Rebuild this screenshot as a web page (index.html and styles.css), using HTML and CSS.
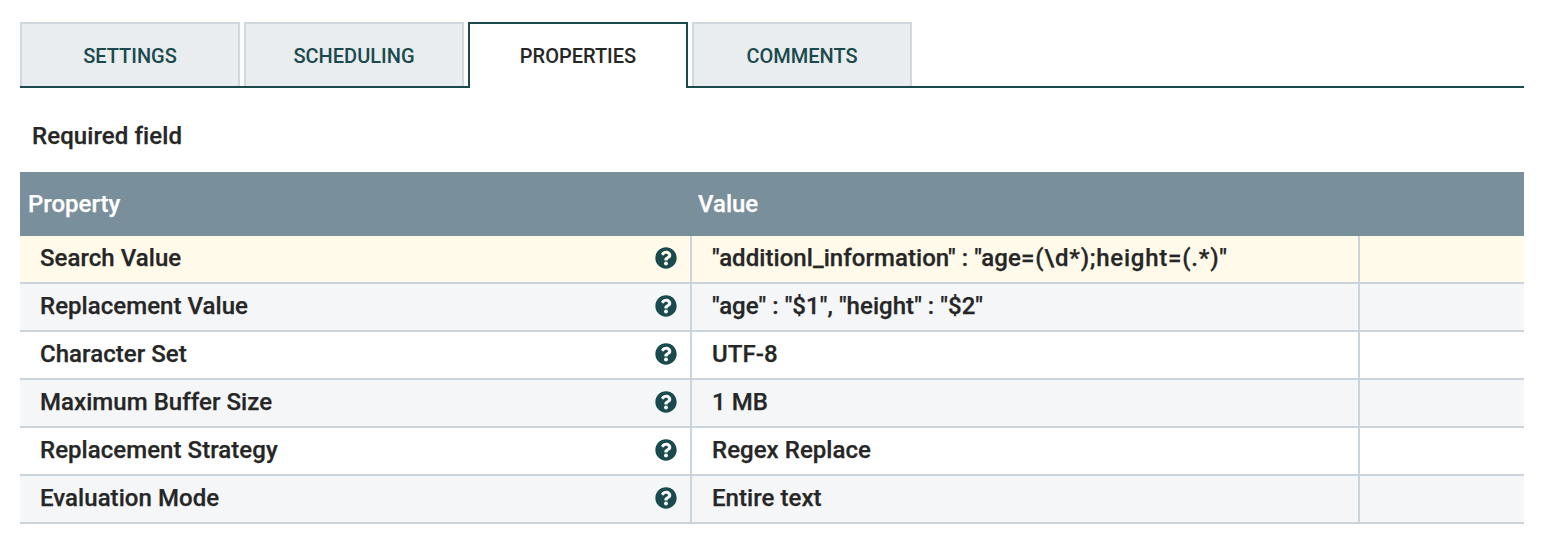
FILE: index.html
```html
<!DOCTYPE html>
<html lang="en">
<head>
  <meta charset="UTF-8">
  <title>Configure Processor</title>
  <link rel="stylesheet" href="styles.css">
</head>
<body>
  <svg class="icon-defs" width="0" height="0">
    <symbol id="help" viewBox="0 0 512 512">
      <path d="M504 256c0 136.997-111.043 248-248 248S8 392.997 8 256C8 119.083 119.043 8 256 8s248 111.083 248 248zM262.655 90c-54.497 0-89.255 22.957-116.549 63.758-3.536 5.286-2.353 12.415 2.715 16.258l34.699 26.31c5.205 3.947 12.621 3.008 16.665-2.122 17.864-22.658 30.113-35.797 57.303-35.797 20.429 0 45.698 13.148 45.698 32.958 0 14.976-12.363 22.667-32.534 33.976C247.128 238.528 216 254.941 216 296v4c0 6.627 5.373 12 12 12h56c6.627 0 12-5.373 12-12v-1.333c0-28.462 83.186-29.647 83.186-106.667 0-58.002-60.165-102-116.531-102zM256 338c-25.365 0-46 20.635-46 46 0 25.364 20.635 46 46 46s46-20.636 46-46c0-25.365-20.635-46-46-46z"/>
    </symbol>
  </svg>

  <div class="tabs">
    <div class="tab">SETTINGS</div>
    <div class="tab">SCHEDULING</div>
    <div class="tab activo">PROPERTIES</div>
    <div class="tab">COMMENTS</div>
  </div>

  <div class="requerido">Required field</div>

  <div class="taboa">
    <div class="cabeceira">
      <div class="cab-prop">Property</div>
      <div class="cab-valor">Value</div>
    </div>
    <div class="fila seleccionada">
      <div class="prop"><span>Search Value</span><svg class="axuda"><use href="#help"/></svg></div>
      <div class="valor">"additionl_information" : "age<span class="regex">=(\d*);height=(.*)"</span></div>
      <div class="accions"></div>
    </div>
    <div class="fila par">
      <div class="prop"><span>Replacement Value</span><svg class="axuda"><use href="#help"/></svg></div>
      <div class="valor">"age" : "$1", "height" : "$2"</div>
      <div class="accions"></div>
    </div>
    <div class="fila">
      <div class="prop"><span>Character Set</span><svg class="axuda"><use href="#help"/></svg></div>
      <div class="valor">UTF-8</div>
      <div class="accions"></div>
    </div>
    <div class="fila par">
      <div class="prop"><span>Maximum Buffer Size</span><svg class="axuda"><use href="#help"/></svg></div>
      <div class="valor">1 MB</div>
      <div class="accions"></div>
    </div>
    <div class="fila">
      <div class="prop"><span>Replacement Strategy</span><svg class="axuda"><use href="#help"/></svg></div>
      <div class="valor">Regex Replace</div>
      <div class="accions"></div>
    </div>
    <div class="fila par">
      <div class="prop"><span>Evaluation Mode</span><svg class="axuda"><use href="#help"/></svg></div>
      <div class="valor">Entire text</div>
      <div class="accions"></div>
    </div>
  </div>
</body>
</html>
```

FILE: styles.css
```css
body {
  margin: 0;
  padding: 22px 24px 0 20px;
  background: white;
  color: #262626;
  font-family: Roboto, sans-serif;
}
.icon-defs {
  position: absolute;
}
.tabs {
  display: flex;
  gap: 4px;
  height: 66px;
  border-bottom: 2px solid #1a4a4d;
  box-sizing: border-box;
}
.tab {
  width: 220px;
  height: 64px;
  box-sizing: border-box;
  display: flex;
  align-items: center;
  justify-content: center;
  padding-top: 2px;
  background: #e9edf0;
  border: 2px solid #cfd8dc;
  border-bottom: none;
  color: #1a4a4d;
  font-size: 20px;
  font-weight: 500;
}
.activo {
  height: 66px;
  padding-bottom: 2px;
  background: white;
  border-color: #1a4a4d;
  color: #262626;
}
.requerido {
  margin: 34px 0 22px 12px;
  height: 28px;
  line-height: 28px;
  font-size: 24px;
  font-weight: 500;
  letter-spacing: 0.1px;
  -webkit-text-stroke: 0.25px #262626;
}
.cabeceira {
  display: flex;
  height: 64px;
  align-items: center;
  background: #7a8f9c;
  color: white;
  font-size: 24px;
  font-weight: 500;
  -webkit-text-stroke: 0.25px white;
}
.cab-prop {
  width: 670px;
  padding-left: 8px;
  box-sizing: border-box;
}
.cab-valor {
  padding-left: 8px;
}
.fila {
  display: flex;
  height: 48px;
  box-sizing: border-box;
  border-bottom: 2px solid #cbd4da;
  font-size: 24px;
  line-height: 44px;
  font-weight: 500;
  letter-spacing: 0.05px;
  -webkit-text-stroke: 0.25px #262626;
  background: white;
}
.par {
  background: #f4f6f8;
}
.seleccionada {
  background: #fffae9;
}
.prop {
  width: 672px;
  box-sizing: border-box;
  display: flex;
  align-items: center;
  justify-content: space-between;
  padding: 0 13px 2px 20px;
  border-right: 2px solid #cbd4da;
}
.axuda {
  width: 22px;
  height: 22px;
  fill: #1a4a4d;
}
.valor {
  width: 668px;
  box-sizing: border-box;
  padding-left: 20px;
  border-right: 2px solid #cbd4da;
}
.regex {
  letter-spacing: 0.75px;
}
.accions {
  flex: 1;
}
```
